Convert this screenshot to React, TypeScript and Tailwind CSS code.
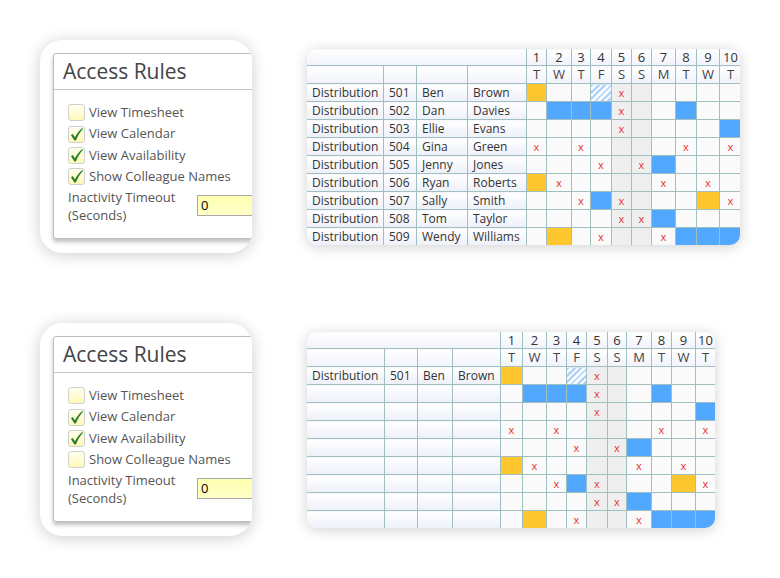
import React from "react";

type Mark = "y" | "b" | "h" | "x";

const days = ["T", "W", "T", "F", "S", "S", "M", "T", "W", "T"];

const people = [
  ["501", "Ben", "Brown"],
  ["502", "Dan", "Davies"],
  ["503", "Ellie", "Evans"],
  ["504", "Gina", "Green"],
  ["505", "Jenny", "Jones"],
  ["506", "Ryan", "Roberts"],
  ["507", "Sally", "Smith"],
  ["508", "Tom", "Taylor"],
  ["509", "Wendy", "Williams"],
];

// day index (0-based) -> mark
const marks: Record<number, Mark>[] = [
  { 0: "y", 3: "h", 4: "x" },
  { 1: "b", 2: "b", 3: "b", 4: "x", 7: "b" },
  { 4: "x", 9: "b" },
  { 0: "x", 2: "x", 7: "x", 9: "x" },
  { 3: "x", 5: "x", 6: "b" },
  { 0: "y", 1: "x", 6: "x", 8: "x" },
  { 2: "x", 3: "b", 4: "x", 8: "y", 9: "x" },
  { 4: "x", 5: "x", 6: "b" },
  { 1: "y", 3: "x", 6: "x", 7: "b", 8: "b", 9: "b" },
];

const font = { fontFamily: '"Open Sans", "Noto Sans", sans-serif' };

function Check() {
  return (
    <svg width="15" height="15" viewBox="0 0 15 15">
      <path
        d="M2 8.3 L3.7 7.1 L5.9 10.3 C8 6.4 10.6 3.2 13.4 1 L14.1 1.8 C11.4 4.6 8.8 8.7 6.9 13.6 L5.4 13.6 Z"
        fill="#2a7f26"
      />
    </svg>
  );
}

function CheckRow({ label, checked }: { label: string; checked: boolean }) {
  return (
    <div className="flex h-[21.4px] items-center gap-[4px]">
      <div className="flex h-[17px] w-[17px] items-center justify-center rounded-[3px] border border-[#cfcfcf] bg-linear-to-b from-[#fffff0] to-[#fff9b8]">
        {checked && <Check />}
      </div>
      <span className="text-[13px] text-[#555]">{label}</span>
    </div>
  );
}

function AccessCard({ showNames }: { showNames: boolean }) {
  return (
    <div className="h-[213px] w-[212px] shrink-0 overflow-hidden rounded-[22px] bg-white pl-[13px] pt-[13px] shadow-[0_2px_16px_rgba(0,0,0,0.2)]" style={font}>
      <div className="h-[186px] w-[240px] rounded-[3px] border border-[#bdbdbd] bg-white shadow-[0_3px_4px_rgba(0,0,0,0.25)]">
        <div className="flex h-[36px] items-center border-b border-[#c4c4c4] pl-[9px] text-[21px] font-medium text-[#444]">
          Access Rules
        </div>
        <div className="pl-[14px] pt-[12px]">
          <CheckRow label="View Timesheet" checked={false} />
          <CheckRow label="View Calendar" checked />
          <CheckRow label="View Availability" checked />
          <CheckRow label="Show Colleague Names" checked={showNames} />
          <div className="flex items-center">
            <div className="w-[129px] text-[13px] leading-[18px] text-[#555]">
              Inactivity Timeout (Seconds)
            </div>
            <div className="flex h-[21px] w-[90px] items-center border border-[#a8a8a8] bg-linear-to-b from-[#ffffb0] to-[#ffffc8] pl-[3px] text-[13px] text-black">
              0
            </div>
          </div>
        </div>
      </div>
    </div>
  );
}

function DayCell({ mark, day }: { mark?: Mark; day: number }) {
  const weekend = day === 4 || day === 5;
  let cls = weekend ? "bg-[#efefef]" : "bg-[#fafafa]";
  if (mark === "y") cls = "bg-[#ffc72f]";
  if (mark === "b") cls = "bg-[#51a8fe]";
  if (mark === "h")
    cls = "bg-[repeating-linear-gradient(135deg,#9fcbf6_0px,#9fcbf6_2px,#ffffff_2px,#ffffff_4.5px)]";
  return (
    <td className={`h-[18px] border border-[#9fbfc1] p-0 text-center leading-[12px] ${cls}`}>
      {mark === "x" && <span className="text-[11px] text-[#e5302e]">x</span>}
    </td>
  );
}

function Rota({ widths, clip, allNames }: { widths: number[]; clip?: number; allNames: boolean }) {
  const total = widths.reduce((a, b) => a + b, 0);
  const nameCell = "h-[18px] border border-[#9fbfc1] bg-linear-to-b from-white to-[#eef0f9] p-0 pl-[5px] text-left leading-[14px] whitespace-nowrap overflow-hidden";
  const head = "border border-[#9fbfc1] bg-linear-to-b from-white to-[#f1f3fb] p-0";
  return (
    <div
      className="mt-[9px] inline-block overflow-hidden rounded-[10px] bg-white shadow-[0_2px_14px_rgba(0,0,0,0.18)]"
      style={{ ...font, width: clip }}
    >
      <table className="-m-px table-fixed border-collapse text-[12px] text-[#333]" style={{ width: total }}>
        <colgroup>
          {widths.map((w, i) => (
            <col key={i} style={{ width: w }} />
          ))}
        </colgroup>
        <tbody>
          <tr>
            <td colSpan={4} className={`h-[17px] ${head}`} />
            {days.map((_, i) => (
              <td key={i} className={`h-[17px] text-center text-[13px] leading-[13px] whitespace-nowrap overflow-hidden ${head}`}>
                {i + 1}
              </td>
            ))}
          </tr>
          <tr>
            {[0, 1, 2, 3].map((i) => (
              <td key={i} className={`h-[18px] ${head}`} />
            ))}
            {days.map((d, i) => (
              <td key={i} className={`h-[18px] text-center text-[13px] font-medium leading-[13px] text-[#444] ${head}`}>
                {d}
              </td>
            ))}
          </tr>
          {people.map((p, r) => {
            const show = allNames || r === 0;
            return (
              <tr key={r}>
                <td className={nameCell}>{show ? "Distribution" : ""}</td>
                <td className={nameCell}>{show ? p[0] : ""}</td>
                <td className={nameCell}>{show ? p[1] : ""}</td>
                <td className={nameCell}>{show ? p[2] : ""}</td>
                {days.map((_, i) => (
                  <DayCell key={i} day={i} mark={marks[r][i]} />
                ))}
              </tr>
            );
          })}
        </tbody>
      </table>
    </div>
  );
}

export default function App() {
  return (
    <div className="flex h-[578px] w-[780px] flex-col gap-[70px] overflow-hidden bg-white pl-[40px] pt-[40px]">
      <div className="flex items-start gap-[55px]">
        <AccessCard showNames />
        <Rota allNames clip={433} widths={[77, 33, 51, 59, 20, 25, 19, 21, 20, 20, 24, 21, 23, 22]} />
      </div>
      <div className="flex items-start gap-[55px]">
        <AccessCard showNames={false} />
        <Rota allNames={false} widths={[78, 33, 35, 48, 22, 24, 20, 20, 21, 19, 25, 20, 24, 20]} />
      </div>
    </div>
  );
}
